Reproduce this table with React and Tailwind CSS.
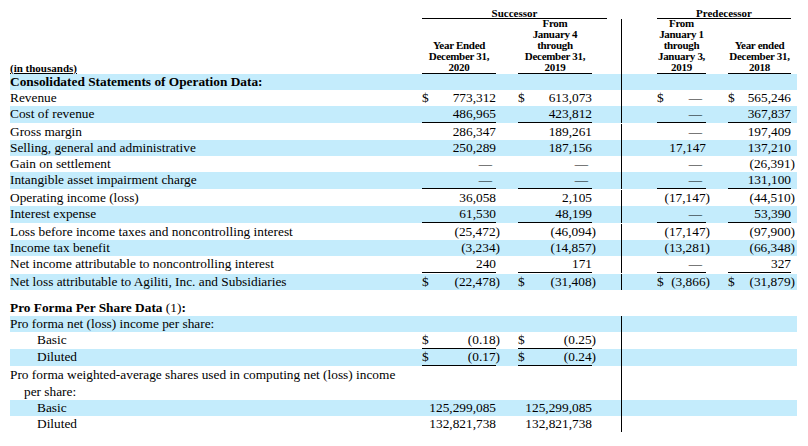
import React from 'react';

const D = '—';

// each cell: [dollar, value]
const rows = [
  { label: 'Revenue', cells: [['$', '773,312'], ['$', '613,073'], ['$', D], ['$', '565,246']] },
  { label: 'Cost of revenue', blue: true, line: true, cells: [['', '486,965'], ['', '423,812'], ['', D], ['', '367,837']] },
  { label: 'Gross margin', cells: [['', '286,347'], ['', '189,261'], ['', D], ['', '197,409']] },
  { label: 'Selling, general and administrative', blue: true, cells: [['', '250,289'], ['', '187,156'], ['', '17,147'], ['', '137,210']] },
  { label: 'Gain on settlement', cells: [['', D], ['', D], ['', D], ['', '(26,391)']] },
  { label: 'Intangible asset impairment charge', blue: true, line: true, cells: [['', D], ['', D], ['', D], ['', '131,100']] },
  { label: 'Operating income (loss)', cells: [['', '36,058'], ['', '2,105'], ['', '(17,147)'], ['', '(44,510)']] },
  { label: 'Interest expense', blue: true, line: true, cells: [['', '61,530'], ['', '48,199'], ['', D], ['', '53,390']] },
  { label: 'Loss before income taxes and noncontrolling interest', cells: [['', '(25,472)'], ['', '(46,094)'], ['', '(17,147)'], ['', '(97,900)']] },
  { label: 'Income tax benefit', blue: true, cells: [['', '(3,234)'], ['', '(14,857)'], ['', '(13,281)'], ['', '(66,348)']] },
  { label: 'Net income attributable to noncontrolling interest', line: true, cells: [['', '240'], ['', '171'], ['', D], ['', '327']] },
  { label: 'Net loss attributable to Agiliti, Inc. and Subsidiaries', blue: true, cells: [['$', '(22,478)'], ['$', '(31,408)'], ['$', '(3,866)'], ['$', '(31,879)']] },
];

const widths = ['w-[74px]', 'w-[74px]', 'w-[49px]', 'w-[63px]'];

const Cell = ({ w, cell, line }) => {
  const [dollar, value] = cell || ['', ''];
  const paren = value && value.startsWith('(');
  return (
    <div className={`${w} shrink-0 flex justify-between ${line ? 'border-b border-black' : ''}`}>
      <span>{dollar}</span>
      <span className={paren ? '-mr-[4px]' : value === D ? 'mr-[4px]' : ''}>{value}</span>
    </div>
  );
};

const Row = ({ label, cells = [], blue, line, bold, indent, extra = '', labelNode }) => (
  <div className={`flex w-[787px] ${blue ? 'bg-[#c4ecfc]' : ''} ${extra}`}>
    <div className={`w-[412px] shrink-0 whitespace-nowrap ${bold ? 'font-bold' : ''} ${indent ? 'pl-[27px]' : ''}`}>
      {labelNode || label}
    </div>
    <Cell w={widths[0]} cell={cells[0]} line={line && cells[0]} />
    <div className="w-[22px] shrink-0" />
    <Cell w={widths[1]} cell={cells[1]} line={line && cells[1]} />
    <div className="w-[29px] shrink-0" />
    <div className="w-[36px] shrink-0 border-l border-black" />
    <Cell w={widths[2]} cell={cells[2]} line={line && cells[2]} />
    <div className="w-[22px] shrink-0" />
    <Cell w={widths[3]} cell={cells[3]} line={line && cells[3]} />
    <div className="w-[6px] shrink-0" />
  </div>
);

const ColHead = ({ w, lines }) => (
  <div className={`${w} shrink-0 border-b border-black flex flex-col items-center justify-end tracking-[-0.3px]`}>
    {lines.map((l) => (
      <div key={l} className="whitespace-nowrap">{l}</div>
    ))}
  </div>
);

export default function App() {
  return (
    <div className="w-[808px] h-[446px] bg-white text-black pl-[10px] pt-[6px] text-[13.33px] leading-[16px]" style={{ fontFamily: '"Liberation Serif", "Times New Roman", serif' }}>
      {/* header: group titles */}
      <div className="flex w-[787px] text-[11px] leading-[10px] font-bold">
        <div className="w-[412px] shrink-0" />
        <div className="w-[185px] shrink-0 border-b border-black text-center pt-[2px]">Successor</div>
        <div className="w-[50px] shrink-0" />
        <div className="w-[134px] shrink-0 border-b border-black text-center pt-[2px]">Predecessor</div>
        <div className="w-[6px] shrink-0" />
      </div>
      {/* header: column titles */}
      <div className="flex w-[787px] h-[55px] text-[11px] leading-[11px] font-bold">
        <div className="w-[412px] shrink-0 flex items-end">
          <span className="underline">(in thousands)</span>
        </div>
        <ColHead w="w-[74px]" lines={['Year Ended', 'December 31,', '2020']} />
        <div className="w-[22px] shrink-0" />
        <ColHead w="w-[74px]" lines={['From', 'January 4', 'through', 'December 31,', '2019']} />
        <div className="w-[29px] shrink-0" />
        <div className="w-[36px] shrink-0 border-l border-black" />
        <ColHead w="w-[49px]" lines={['From', 'January 1', 'through', 'January 3,', '2019']} />
        <div className="w-[22px] shrink-0" />
        <ColHead w="w-[63px]" lines={['Year ended', 'December 31,', '2018']} />
        <div className="w-[6px] shrink-0" />
      </div>

      <Row label="Consolidated Statements of Operation Data:" bold blue />
      {rows.map((r) => (
        <Row key={r.label} {...r} extra={r.line ? 'mb-[1px]' : ''} />
      ))}

      <Row
        extra="h-[26px] items-end"
        labelNode={
          <span className="font-bold">
            Pro Forma Per Share Data <span className="font-normal">(1)</span>:
          </span>
        }
      />
      <Row label="Pro forma net (loss) income per share:" blue />
      <Row label="Basic" indent line cells={[['$', '(0.18)'], ['$', '(0.25)']]} />
      <Row label="Diluted" indent line blue cells={[['$', '(0.17)'], ['$', '(0.24)']]} />
      <Row
        extra="leading-[17px]"
        labelNode={
          <>
            <div>Pro forma weighted-average shares used in computing net (loss) income</div>
            <div className="pl-[14px]">per share:</div>
          </>
        }
      />
      <Row label="Basic" indent blue cells={[['', '125,299,085'], ['', '125,299,085']]} />
      <Row label="Diluted" indent cells={[['', '132,821,738'], ['', '132,821,738']]} />
    </div>
  );
}
